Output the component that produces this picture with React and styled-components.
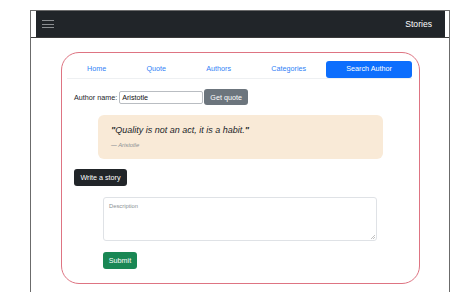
import React from 'react'
import styled, { createGlobalStyle } from 'styled-components'

const Global = createGlobalStyle`
  html, body {
    margin: 0;
    padding: 0;
    background: #ffffff;
    font-family: "Liberation Sans", Arial, sans-serif;
    overflow: hidden;
  }
`

const Page = styled.div`
  width: 474px;
  height: 292px;
  padding: 10px 0 0 30px;
  box-sizing: border-box;
`

const Frame = styled.div`
  width: 420px;
  height: 290px;
  box-sizing: border-box;
  border: 1px solid #6b6b6b;
  border-bottom: 0;
`

const Header = styled.div`
  border-bottom: 1px solid #3a3a3a;
  padding: 0 4px 0 5px;
`

const Navbar = styled.div`
  height: 26px;
  background: #212529;
  display: flex;
  align-items: center;
  justify-content: space-between;
  padding: 0 13px 0 6px;
`

const Burger = styled.div`
  width: 12px;
  display: flex;
  flex-direction: column;
  gap: 2.7px;
  span {
    display: block;
    height: 1px;
    background: #8c8f92;
  }
`

const Brand = styled.span`
  color: #ffffff;
  font-size: 8.6px;
`

const Card = styled.div`
  margin: 14px 0 0 30px;
  width: 359px;
  box-sizing: border-box;
  border: 1.5px solid #de7482;
  border-radius: 18px;
  padding: 8px 7px 14px 5px;
`

const Nav = styled.div`
  display: flex;
  border-bottom: 1px solid #eef0f2;
`

const Tab = styled.div`
  flex: 1 1 auto;
  text-align: center;
  font-size: 7.2px;
  line-height: 10.8px;
  padding: 3.2px 7.2px;
  border-radius: 3px;
  color: ${p => (p.$active ? '#ffffff' : '#2f7ff6')};
  background: ${p => (p.$active ? '#0d6efd' : 'transparent')};
`

const Row = styled.div`
  display: flex;
  align-items: center;
  margin: 10px 0 0 7px;
  font-size: 7.2px;
  color: #212529;
`

const Label = styled.span`
  margin-right: 2px;
`

const Input = styled.div`
  width: 84px;
  height: 13px;
  box-sizing: border-box;
  border: 1px solid #b9bdc2;
  border-radius: 2px;
  padding: 0 2px;
  line-height: 11px;
  font-size: 7.2px;
  color: #111;
  margin-right: 1px;
`

const Button = styled.div`
  height: ${p => p.$h || 17}px;
  width: ${p => p.$w}px;
  box-sizing: border-box;
  display: flex;
  align-items: center;
  justify-content: center;
  border-radius: 3px;
  font-size: 7.2px;
  color: #ffffff;
  background: ${p => p.$bg};
  margin-left: ${p => p.$ml || 0}px;
  margin-top: ${p => p.$mt || 0}px;
`

const Quote = styled.div`
  margin: 10px 0 0 31px;
  width: 285px;
  height: 44px;
  box-sizing: border-box;
  background: #f9ead7;
  border-radius: 6px;
  padding: 10px 13px 0;
`

const QuoteText = styled.div`
  font-size: 9px;
  font-style: italic;
  color: #212529;
  line-height: 11px;
  b {
    font-weight: 700;
  }
`

const QuoteFoot = styled.div`
  margin-top: 6px;
  font-size: 5.8px;
  font-style: italic;
  color: #8a8f94;
`

const Textarea = styled.div`
  position: relative;
  margin: 11px 0 0 36px;
  width: 274px;
  height: 44px;
  box-sizing: border-box;
  border: 1px solid #dfe2e6;
  border-radius: 3px;
  padding: 5px 5px;
  font-size: 5.8px;
  color: #8a8f94;
`

const Grip = styled.svg`
  position: absolute;
  right: 1px;
  bottom: 1px;
`

export default function App() {
  return (
    <>
      <Global />
      <Page>
        <Frame>
          <Header>
            <Navbar>
              <Burger>
                <span />
                <span />
                <span />
              </Burger>
              <Brand>Stories</Brand>
            </Navbar>
          </Header>
          <Card>
            <Nav>
              <Tab>Home</Tab>
              <Tab>Quote</Tab>
              <Tab>Authors</Tab>
              <Tab>Categories</Tab>
              <Tab $active>Search Author</Tab>
            </Nav>
            <Row>
              <Label>Author name:</Label>
              <Input>Aristotle</Input>
              <Button $bg="#6c757d" $w={44} $h={16}>Get quote</Button>
            </Row>
            <Quote>
              <QuoteText>
                <b>"</b>Quality is not an act, it is a habit.<b>"</b>
              </QuoteText>
              <QuoteFoot>— Aristotle</QuoteFoot>
            </Quote>
            <Button $bg="#212529" $w={53} $ml={7} $mt={10}>Write a story</Button>
            <Textarea>
              Description
              <Grip width="5" height="5" viewBox="0 0 5 5">
                <path d="M1 5 L5 1 M3 5 L5 3" stroke="#999" strokeWidth="0.6" />
              </Grip>
            </Textarea>
            <Button $bg="#198754" $w={34} $ml={36} $mt={11}>Submit</Button>
          </Card>
        </Frame>
      </Page>
    </>
  )
}
